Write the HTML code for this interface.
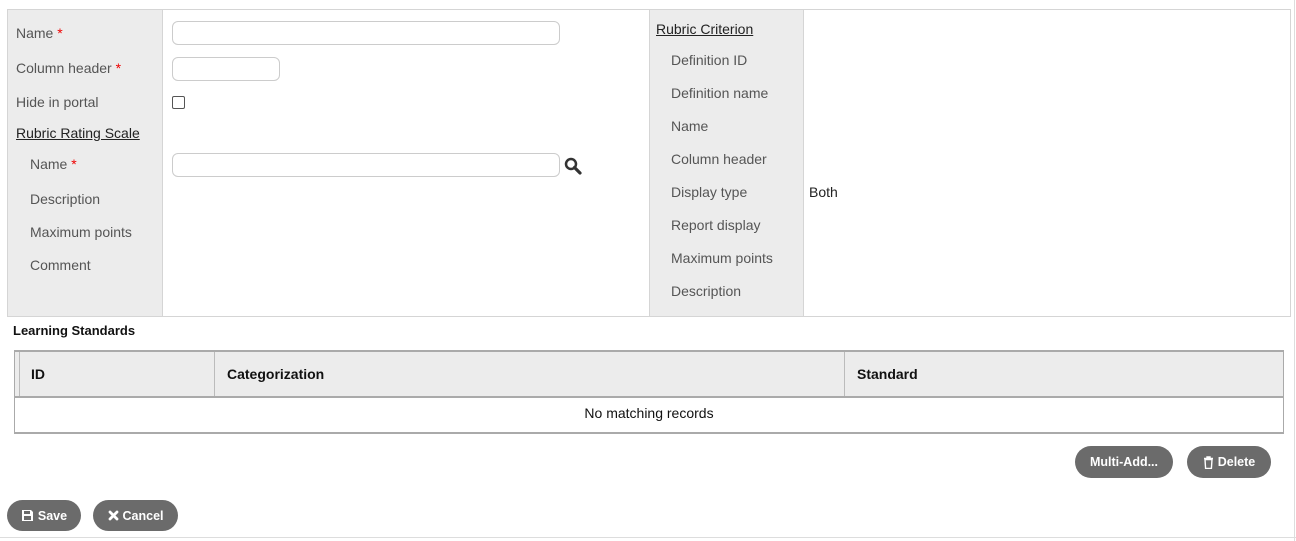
<!DOCTYPE html><html><head><style>
body{margin:0;width:1296px;height:541px;position:relative;background:#fff;font-family:"Liberation Sans",Arial,sans-serif;font-size:14px;color:#555;overflow:hidden}
.a{position:absolute}
.l{position:absolute;white-space:nowrap}
.s{color:#e00}
.u{color:#222;text-decoration:underline}
.in{position:absolute;border:1px solid #ccc;border-radius:6px;background:#fff;box-sizing:border-box}
.btn{position:absolute;background:#6b6b6b;color:#fff;font-weight:bold;font-size:12.5px;border-radius:16px;display:flex;align-items:center;justify-content:center;gap:4px}
th,td{padding:0}
</style></head><body>
<div class="a" style="left:7px;top:9px;width:1282px;height:306px;border:1px solid #d5d5d5"></div>
<div class="a" style="left:8px;top:10px;width:154px;height:306px;background:#ececec;border-right:1px solid #d5d5d5"></div>
<div class="a" style="left:649px;top:10px;width:153px;height:306px;background:#ececec;border-left:1px solid #d5d5d5;border-right:1px solid #d5d5d5"></div>
<div class="a" style="left:1294px;top:0;width:1px;height:541px;background:#ddd"></div>
<div class="l" style="left:16px;top:25px">Name <span class="s">*</span></div>
<div class="l" style="left:16px;top:60px">Column header <span class="s">*</span></div>
<div class="l" style="left:16px;top:94px">Hide in portal</div>
<div class="l u" style="left:16px;top:125px">Rubric Rating Scale</div>
<div class="l" style="left:30px;top:156px">Name <span class="s">*</span></div>
<div class="l" style="left:30px;top:191px">Description</div>
<div class="l" style="left:30px;top:224px">Maximum points</div>
<div class="l" style="left:30px;top:257px">Comment</div>
<div class="in" style="left:172px;top:21px;width:388px;height:24px"></div>
<div class="in" style="left:172px;top:57px;width:108px;height:24px"></div>
<div class="in" style="left:172px;top:96px;width:13px;height:13px;border:1px solid #555;border-radius:2px"></div>
<div class="in" style="left:172px;top:153px;width:388px;height:24px"></div>
<svg class="a" style="left:564px;top:157px" width="18" height="18" viewBox="0 0 18 18"><circle cx="7" cy="7" r="5" fill="none" stroke="#333" stroke-width="2.5"/><path d="M10.5 10.5 L16 16" stroke="#333" stroke-width="3.2" stroke-linecap="round"/></svg>
<div class="l u" style="left:656px;top:21px">Rubric Criterion</div>
<div class="l" style="left:671px;top:52px">Definition ID</div>
<div class="l" style="left:671px;top:85px">Definition name</div>
<div class="l" style="left:671px;top:118px">Name</div>
<div class="l" style="left:671px;top:151px">Column header</div>
<div class="l" style="left:671px;top:184px">Display type</div>
<div class="l" style="left:809px;top:184px;color:#222">Both</div>
<div class="l" style="left:671px;top:217px">Report display</div>
<div class="l" style="left:671px;top:250px">Maximum points</div>
<div class="l" style="left:671px;top:283px">Description</div>
<div class="l" style="left:13px;top:323px;font-weight:bold;font-size:13px;color:#111">Learning Standards</div>
<div class="a" style="left:14px;top:350px;width:1268px;height:80px;border:1px solid #aaa;border-top:2px solid #aaa;border-bottom:2px solid #aaa"></div>
<div class="a" style="left:15px;top:352px;width:1268px;height:44px;background:#ececec;border-bottom:2px solid #aaa"></div>
<div class="a" style="left:19px;top:352px;width:1px;height:44px;background:#bbb"></div>
<div class="a" style="left:214px;top:352px;width:1px;height:44px;background:#bbb"></div>
<div class="a" style="left:844px;top:352px;width:1px;height:44px;background:#bbb"></div>
<div class="l" style="left:31px;top:366px;font-weight:bold;color:#111">ID</div>
<div class="l" style="left:227px;top:366px;font-weight:bold;color:#111">Categorization</div>
<div class="l" style="left:857px;top:366px;font-weight:bold;color:#111">Standard</div>
<div class="l" style="left:0;width:1298px;text-align:center;top:405px;color:#111">No matching records</div>
<div class="btn" style="left:1075px;top:446px;width:98px;height:32px">Multi-Add...</div>
<div class="btn" style="left:1187px;top:446px;width:84px;height:32px"><svg width="11" height="13" viewBox="0 0 11 13"><path d="M1 2.5h9M4 2.5V1h3v1.5M2 3.5h7l-.6 9H2.6z" fill="none" stroke="#fff" stroke-width="1.4"/></svg>Delete</div>
<div class="btn" style="left:7px;top:500px;width:74px;height:31px"><svg width="13" height="13" viewBox="0 0 13 13"><path d="M1 1h9l2 2v9H1z" fill="#fff"/><rect x="3" y="2" width="6" height="3" fill="#6b6b6b"/><rect x="3" y="7" width="7" height="4" fill="#6b6b6b"/></svg>Save</div>
<div class="btn" style="left:93px;top:500px;width:85px;height:31px"><svg width="11" height="11" viewBox="0 0 11 11"><path d="M2 2L9 9M9 2L2 9" stroke="#fff" stroke-width="2.8" stroke-linecap="round"/></svg>Cancel</div>
<div class="a" style="left:0;top:537px;width:1296px;height:1px;background:#ddd"></div>
</body></html>
